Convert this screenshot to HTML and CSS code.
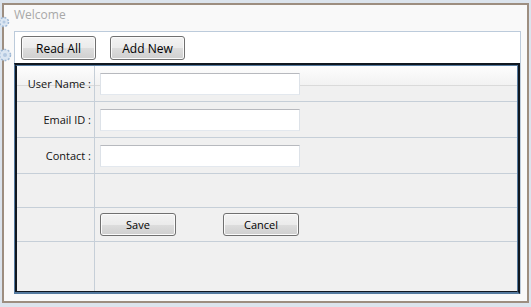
FILE: index.html
```html
<!DOCTYPE html>
<html lang="en">
<head>
  <meta charset="UTF-8" />
  <title>Welcome</title>
  <link rel="stylesheet" href="styles.css">
</head>
<body>
  <!-- designer adorners on the left edge -->
  <svg class="adorner a1" width="12" height="12" viewBox="0 0 12 12">
    <circle cx="6" cy="6" r="4.5" fill="#dbe6f2" stroke="#9fb9d6" stroke-width="1.5" stroke-dasharray="2 1.5" />
    <circle cx="6" cy="6" r="1.5" fill="#b4c9e1" />
  </svg>
  <svg class="adorner a2" width="14" height="14" viewBox="0 0 14 14">
    <circle cx="7" cy="7" r="5.5" fill="#dbe6f2" stroke="#9fb9d6" stroke-width="1.5" stroke-dasharray="2 1.5" />
    <circle cx="7" cy="7" r="2" fill="#b4c9e1" />
  </svg>

  <div class="window">
    <div class="title">Welcome</div>

    <div class="panel">
      <div class="toolbar">
        <button class="btn wide">Read All</button>
        <button class="btn wide">Add New</button>
      </div>

      <div class="form">
        <div class="form-inner">
          <div class="row first">
            <div class="lbl">User Name :</div>
            <div class="cell"><input class="tb" type="text"></div>
          </div>
          <div class="row">
            <div class="lbl">Email ID :</div>
            <div class="cell"><input class="tb" type="text"></div>
          </div>
          <div class="row">
            <div class="lbl">Contact :</div>
            <div class="cell"><input class="tb" type="text"></div>
          </div>
          <div class="row short">
            <div class="lbl"></div>
            <div class="cell"></div>
          </div>
          <div class="row short">
            <div class="lbl"></div>
            <div class="cell actions">
              <button class="btn small">Save</button>
              <button class="btn small">Cancel</button>
            </div>
          </div>
          <div class="row last">
            <div class="lbl"></div>
            <div class="cell"></div>
          </div>
        </div>
      </div>
    </div>
  </div>
</body>
</html>
```

FILE: styles.css
```css
body {
  margin: 0;
  width: 531px;
  height: 307px;
  overflow: hidden;
  background: #dce4ed;
  font-family: 'Open Sans', sans-serif;
  font-size: 11px;
  color: #111;
}
.adorner {
  position: absolute;
  left: -2px;
}
.a1 { top: 16px; }
.a2 { top: 48px; }

.window {
  box-sizing: border-box;
  width: 527px;
  height: 300px;
  margin: 3px 2px 0 2px;
  border: 2px solid #9d8e80;
  background: #f9f9f9;
}
.title {
  padding: 2px 0 8px 10px;
  line-height: 16px;
  font-size: 12px;
  color: #a8a8a8;
}
.panel {
  margin: 0 6px 0 10px;
  border: 1px solid #bccbdb;
  border-bottom: none;
  background: #fff;
}
.toolbar {
  display: flex;
  gap: 14px;
  padding: 4px 0 3px 6px;
}

/* classic grey button */
.btn {
  box-sizing: border-box;
  border: 1px solid #707070;
  border-radius: 3px;
  background: linear-gradient(#f3f3f3 0%, #ebebeb 50%, #dddddd 50%, #cfcfcf 100%);
  box-shadow: inset 0 0 0 1px #fbfbfb;
  font-family: 'Open Sans', sans-serif;
  font-size: 12px;
  color: #000;
  padding: 0;
}
.btn.wide {
  width: 75px;
  height: 24px;
}
.btn.small {
  width: 76px;
  height: 23px;
  font-size: 11px;
}

/* the form grid */
.form {
  margin-left: -1px;
  border-style: solid;
  border-width: 2px 2px 2px 1px;
  border-color: #10171f #10171f #557a9f #557a9f;
}
.form-inner {
  border-style: solid;
  border-width: 1px 1px 1px 2px;
  border-color: #557a9f #557a9f #10171f #10171f;
  background: #f0f0f0;
}
.row {
  display: flex;
  height: 36px;
  box-sizing: border-box;
  border-bottom: 1px solid #c6cfd8;
}
.row.first {
  background: linear-gradient(#fdfdfd 0, #f2f2f2 19px, #dadada 19px, #dadada 20px, #f0f0f0 20px);
}
.row.short { height: 34px; }
.row.last {
  height: 49px;
  border-bottom: none;
}
.lbl {
  box-sizing: border-box;
  width: 78px;
  border-right: 1px solid #c6cfd8;
  padding: 7px 3px 0 0;
  line-height: 22px;
  text-align: right;
}
.cell {
  flex: 1;
  padding: 7px 0 0 5px;
}
.tb {
  box-sizing: border-box;
  display: block;
  width: 200px;
  height: 22px;
  margin: 0;
  border: 1px solid;
  border-color: #b7b9be #dde2e8 #e3e8ee #dde2e8;
  background: #fff;
  outline: none;
}
.actions {
  display: flex;
  gap: 47px;
  padding-top: 5px;
}
```
